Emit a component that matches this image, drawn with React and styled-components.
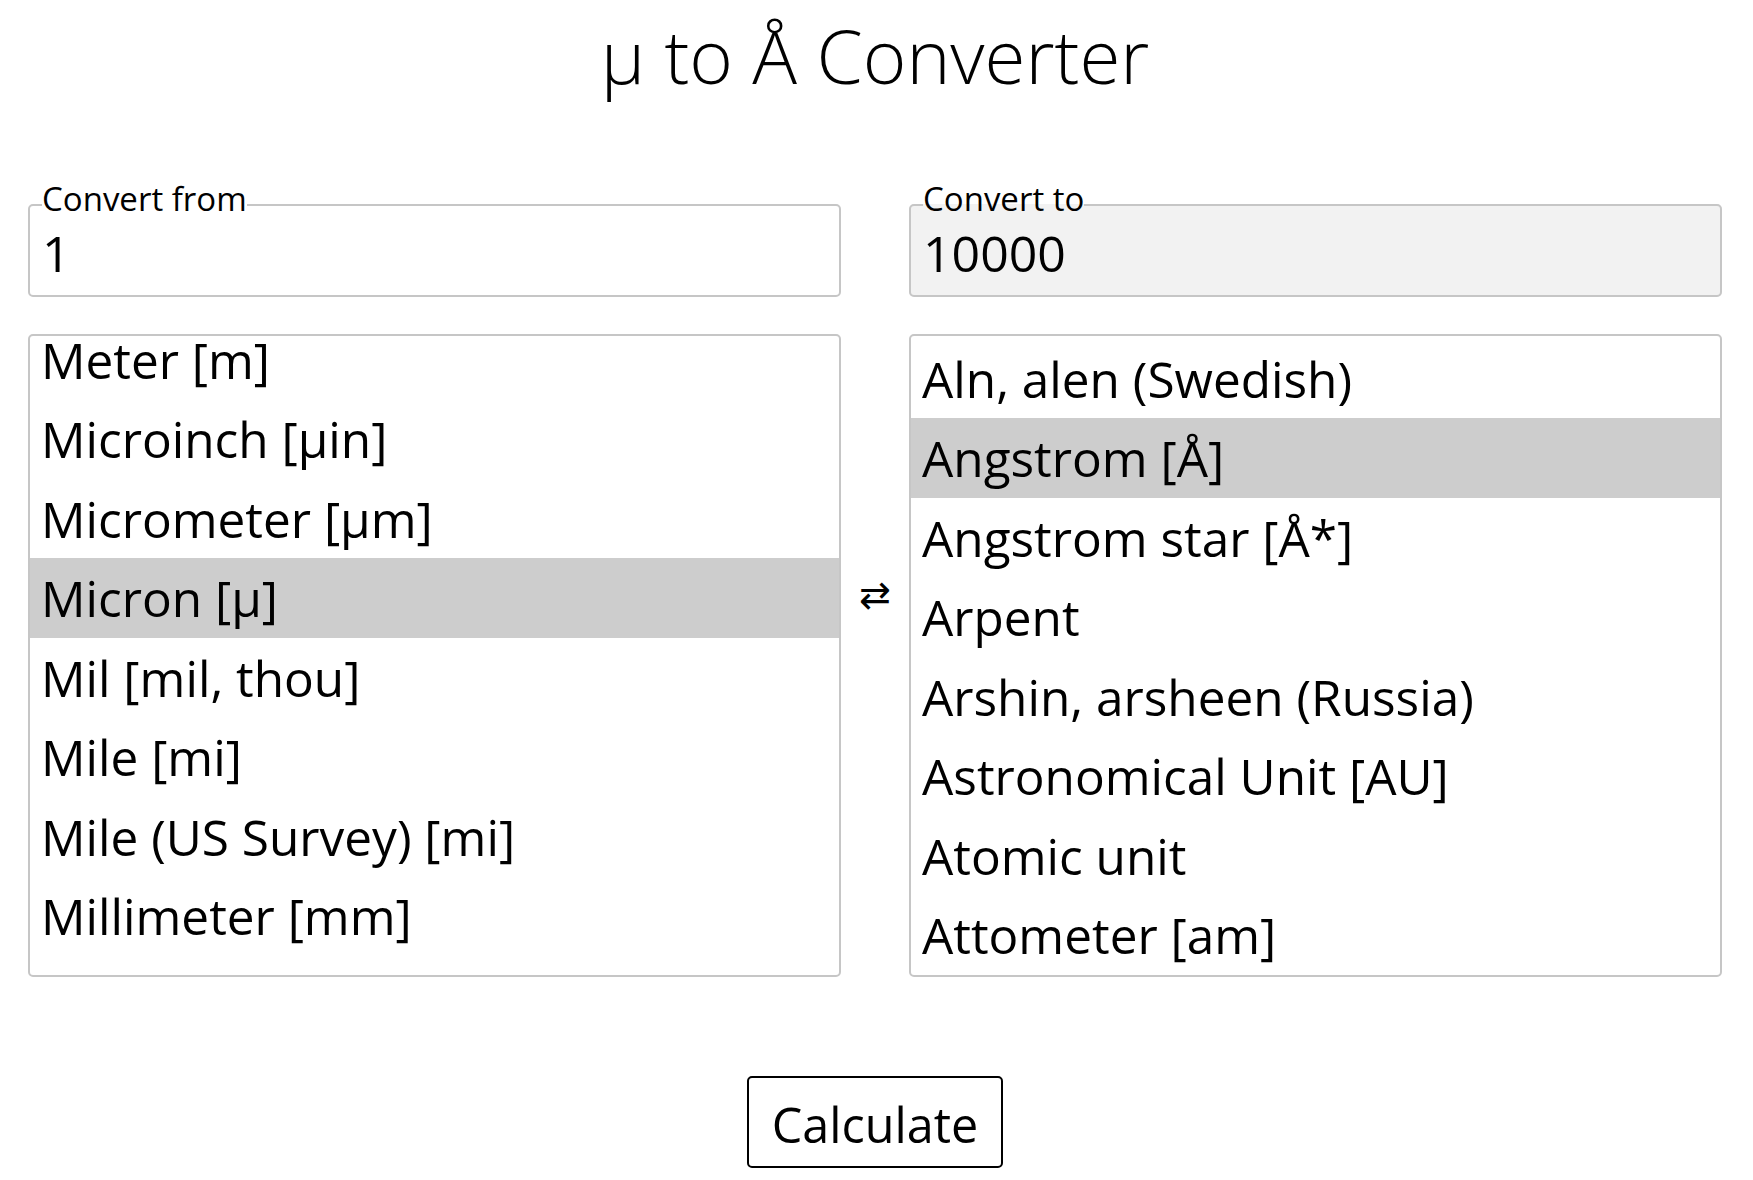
import React, { useLayoutEffect, useRef, useState } from 'react'
import styled, { createGlobalStyle } from 'styled-components'

const GlobalStyle = createGlobalStyle`
  body {
    margin: 0;
    background: #fff;
    color: #000;
    font-family: "Open Sans", "Noto Sans", sans-serif;
  }
`

const fromUnits = [
  'Meter [m]',
  'Microinch [μin]',
  'Micrometer [μm]',
  'Micron [μ]',
  'Mil [mil, thou]',
  'Mile [mi]',
  'Mile (US Survey) [mi]',
  'Millimeter [mm]',
  'Millimicron [mμ]',
]

const toUnits = [
  'Aln, alen (Swedish)',
  'Angstrom [Å]',
  'Angstrom star [Å*]',
  'Arpent',
  'Arshin, arsheen (Russia)',
  'Astronomical Unit [AU]',
  'Atomic unit',
  'Attometer [am]',
]

const Page = styled.main`
  display: flex;
  flex-direction: column;
  align-items: center;
  width: 1694px;
  margin-left: 28px;
`

const Title = styled.h1`
  margin: 5px 0 76px;
  font-size: 74.5px;
  font-weight: 300;
  line-height: 101px;
  text-align: center;
  white-space: nowrap;
`

const Converter = styled.div`
  display: grid;
  grid-template-columns: 813px 68px 813px;
  row-gap: 37px;
`

const Field = styled.fieldset`
  grid-column: ${p => p.$col};
  grid-row: 1;
  min-width: 0;
  margin: 0;
  padding: 0 12px 16px;
  border: 2px solid #c6c6c6;
  border-radius: 5px;
  background: ${p => (p.$readOnly ? '#f2f2f2' : '#fff')};
`

const Legend = styled.legend`
  margin: 0;
  padding: 0 0 12px;
  font-size: 33px;
  line-height: 33px;
`

const ValueInput = styled.input`
  display: block;
  width: 100%;
  height: 52px;
  padding: 0;
  border: none;
  outline: none;
  background: transparent;
  font-family: inherit;
  font-size: 50px;
  line-height: 52px;
  color: #000;
`

const Swap = styled.div`
  grid-column: 2;
  grid-row: 1 / span 2;
  align-self: center;
  justify-self: center;
  padding-top: 30px;
  font-family: "DejaVu Sans", sans-serif;
  font-size: 38px;
  line-height: 1;
`

const List = styled.div`
  grid-column: ${p => p.$col};
  grid-row: 2;
  box-sizing: border-box;
  height: 643px;
  padding-top: 2.5px;
  border: 2px solid #c6c6c6;
  border-radius: 5px;
  overflow: hidden;
`

const Option = styled.div`
  box-sizing: border-box;
  height: 79.5px;
  padding: 2px 11px 0;
  font-size: 49.5px;
  line-height: 77.5px;
  white-space: nowrap;
  background: ${p => (p.$selected ? '#cdcdcd' : 'transparent')};
`

const CalcButton = styled.button`
  box-sizing: border-box;
  height: 92px;
  margin-top: 99px;
  padding: 4px 23px 0;
  border: 2px solid #000;
  border-radius: 5px;
  background: #fff;
  color: #000;
  font-family: inherit;
  font-size: 48.5px;
  line-height: 84px;
`

const UnitList = ({ col, items, selected, scroll = 0 }) => {
  const ref = useRef(null)
  useLayoutEffect(() => {
    if (ref.current) ref.current.scrollTop = scroll
  }, [scroll])
  return (
    <List ref={ref} $col={col}>
      {items.map(item => (
        <Option key={item} $selected={item === selected}>
          {item}
        </Option>
      ))}
    </List>
  )
}

export default function App() {
  const [value, setValue] = useState('1')
  return (
    <>
      <GlobalStyle />
      <Page>
        <Title>μ to Å Converter</Title>
        <Converter>
          <Field $col={1}>
            <Legend>Convert from</Legend>
            <ValueInput value={value} onChange={e => setValue(e.target.value)} />
          </Field>
          <Field $col={3} $readOnly>
            <Legend>Convert to</Legend>
            <ValueInput value="10000" readOnly />
          </Field>
          <Swap>⇄</Swap>
          <UnitList col={1} items={fromUnits} selected="Micron [μ]" scroll={19} />
          <UnitList col={3} items={toUnits} selected="Angstrom [Å]" />
        </Converter>
        <CalcButton>Calculate</CalcButton>
      </Page>
    </>
  )
}
